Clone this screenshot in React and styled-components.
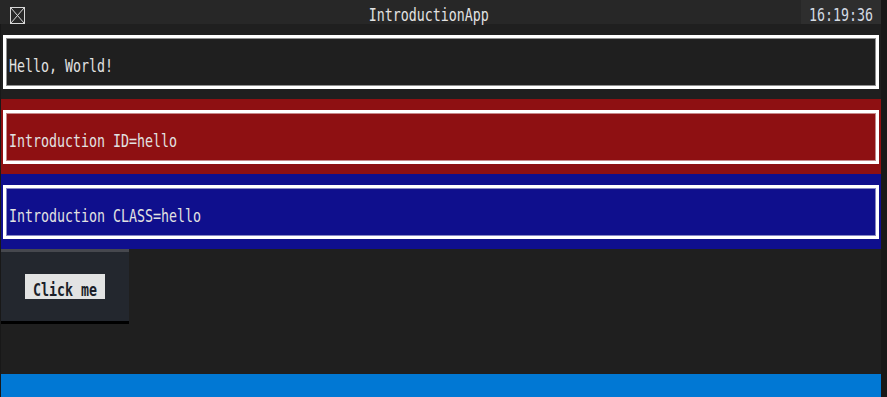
import React from "react";
import styled, { createGlobalStyle } from "styled-components";

const Global = createGlobalStyle`
  html, body { margin: 0; padding: 0; background: #1f1f1f; }
  #root { width: 887px; height: 397px; overflow: hidden; }
`;

const Screen = styled.div`
  display: flex;
  width: 887px;
  height: 397px;
  background: #181818;
`;

const Main = styled.div`
  display: flex;
  flex-direction: column;
  width: 881px;
  height: 100%;
`;

const Gutter = styled.div`
  width: 6px;
  background: #181818;
`;

const Text = styled.span`
  display: inline-block;
  font-family: "DejaVu Sans Mono", "Liberation Mono", monospace;
  font-size: 17px;
  line-height: 17px;
  font-weight: ${(p) => (p.$bold ? 700 : 400)};
  color: ${(p) => p.$color || "#e2e2e2"};
  white-space: pre;
  transform: scaleX(0.782);
  transform-origin: ${(p) => p.$origin || "left"} center;
`;

const Header = styled.header`
  display: flex;
  height: 24px;
  background: #272727;
`;

const IconCell = styled.div`
  width: 64px;
  display: flex;
  align-items: flex-end;
  padding-left: 10px;
  box-sizing: border-box;
`;

const Title = styled.div`
  flex: 1;
  display: flex;
  justify-content: center;
  padding-top: 7px;
  padding-right: 7px;
`;

const Clock = styled.div`
  width: 80px;
  box-sizing: border-box;
  background: #2e2e2e;
  padding: 7px 0 0 8px;
`;

const Body = styled.div`
  flex: 1;
  display: flex;
`;

const Edge = styled.div`
  width: 1px;
  background: #181818;
`;

const Content = styled.div`
  flex: 1;
  display: flex;
  flex-direction: column;
  background: #1f1f1f;
`;

const Section = styled.section`
  height: 75px;
  display: flex;
  flex-direction: column;
  justify-content: center;
  background: ${(p) => p.$bg || "transparent"};
`;

const Box = styled.div`
  margin: 0 2px;
  height: 54px;
  box-sizing: border-box;
  border: 3px solid #ffffff;
  box-shadow: inset 0 0 0 1px rgba(255, 255, 255, 0.5);
  padding: 20px 3px 11px;
`;

const ButtonRow = styled.div`
  height: 75px;
  display: flex;
`;

const Button = styled.div`
  width: 128px;
  height: 75px;
  box-sizing: border-box;
  background: #23272e;
  border-top: 3px solid #46484e;
  border-bottom: 3px solid #000000;
  display: flex;
  align-items: center;
  justify-content: center;
`;

const Label = styled.div`
  width: 80px;
  height: 25px;
  box-sizing: border-box;
  background: #e2e3e3;
  padding: 8px 0 0 8px;
`;

const Spacer = styled.div`
  flex: 1;
`;

const Footer = styled.footer`
  height: 23px;
  background: #0178d4;
`;

const HeaderIcon = () => (
  <svg width="15" height="17" viewBox="0 0 15 17" fill="none">
    <rect x="0.5" y="0.5" width="14" height="16" stroke="#d8d8d8" strokeWidth="1" />
    <path d="M1 1 L14 16 M14 1 L1 16" stroke="#d8d8d8" strokeWidth="1" />
  </svg>
);

export default function App() {
  return (
    <>
      <Global />
      <Screen>
        <Main>
          <Header>
            <IconCell>
              <HeaderIcon />
            </IconCell>
            <Title>
              <Text $origin="center">IntroductionApp</Text>
            </Title>
            <Clock>
              <Text $color="#d4dbe4">16:19:36</Text>
            </Clock>
          </Header>
          <Body>
            <Edge />
            <Content>
              <Section>
                <Box>
                  <Text>Hello, World!</Text>
                </Box>
              </Section>
              <Section $bg="#8e1012">
                <Box>
                  <Text>Introduction ID=hello</Text>
                </Box>
              </Section>
              <Section $bg="#0f0f8d">
                <Box>
                  <Text>Introduction CLASS=hello</Text>
                </Box>
              </Section>
              <ButtonRow>
                <Button>
                  <Label>
                    <Text $bold $color="#1b1f29">Click me</Text>
                  </Label>
                </Button>
              </ButtonRow>
              <Spacer />
              <Footer />
            </Content>
          </Body>
        </Main>
        <Gutter />
      </Screen>
    </>
  );
}
